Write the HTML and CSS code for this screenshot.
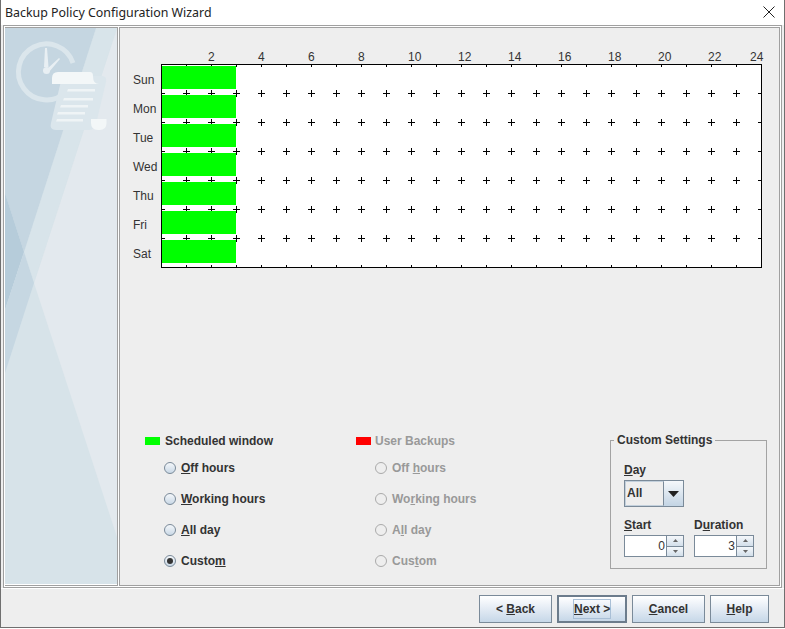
FILE: index.html
```html
<!DOCTYPE html>
<html lang="en">
<head>
<meta charset="utf-8">
<title>Backup Policy Configuration Wizard</title>
<link rel="stylesheet" href="styles.css">
</head>
<body>
<div class="window">
  <header class="titlebar">
    <span class="title">Backup Policy Configuration Wizard</span>
    <svg class="close" width="12" height="12" viewBox="0 0 12 12"><path d="M.5.5l11 11M11.500.5l-11 11"/></svg>
  </header>
  <div class="frame">
    <aside class="banner">
      <svg class="art" width="112" height="556" viewBox="5 28 112 556" preserveAspectRatio="none">
        <rect x="5" y="28" width="112" height="556" fill="#d7e3e9"/>
        <polygon points="117,28 117,537 34,283" fill="#e3e9ee"/>
        <polygon points="96,28 117,28 34,283 24,252" fill="#d8e4ea"/>
        <polygon points="5,28 96,28 24,252 5,193" fill="#c5d6e1"/>
        <polygon points="5,193 24,252 5,310" fill="#b6ccda"/>
        <polygon points="24,252 34,283 5,373 5,310" fill="#c6d7e2"/>
        <path d="M66 92A28 28 0 1 1 73 63" fill="none" stroke="#dbe6ec" stroke-width="5"/>
        <path d="M45 48h2l1.500 19h-4.500z M47 69l12-11 1 1-11 13z" fill="#e8eff3"/>
        <circle cx="46.500" cy="70.500" r="3.500" fill="#e8eff3"/>
        <path d="M66 76h36q5 0 4 6l-10 42q-1 6-8 6H56q-7 0-5-7l10-42q1-5 5-5z" fill="#dbe6ec"/>
        <path d="M52 84v-6q0-6 6-6h32q3 0 3 4q0 8 6 8z" fill="#f3f7f8"/>
        <path d="M68 89h27v2.500H67z M64 98h29v2.500H63z M61 105h27v2.500H60z M58 112h27v2.500H57z M57 119h26v2.500H56z" fill="#eff4f6"/>
        <path d="M91 119h15.500v4q0 7-7 7H98q-7 0-7-7z" fill="#f3f7f8"/>
      </svg>
    </aside>
    <main class="content">
      <section class="schedule">
        <div class="hours">
          <span>2</span><span>4</span><span>6</span><span>8</span><span>10</span><span>12</span>
          <span>14</span><span>16</span><span>18</span><span>20</span><span>22</span><span class="hour-last">24</span>
        </div>
        <div class="chart-row">
          <div class="days">
            <span>Sun</span><span>Mon</span><span>Tue</span><span>Wed</span><span>Thu</span><span>Fri</span><span>Sat</span>
          </div>
          <svg class="chart" width="601" height="204" viewBox="0 0 601 204">
            <defs>
              <pattern id="plus" x="13" y="15" width="25" height="29" patternUnits="userSpaceOnUse">
                <path d="M9 14.500h7M12.500 11v7" stroke="#000" fill="none"/>
              </pattern>
              <pattern id="tick" x="13" y="0" width="25" height="3" patternUnits="userSpaceOnUse">
                <path d="M12.500 0v3" stroke="#000" fill="none"/>
              </pattern>
            </defs>
            <rect x=".5" y=".5" width="600" height="203" fill="#fff" stroke="#000"/>
            <rect x="1" y="26" width="599" height="152" fill="url(#plus)"/>
            <rect x="1" y="1" width="599" height="2" fill="url(#tick)"/>
            <rect x="1" y="201" width="599" height="2" fill="url(#tick)"/>
            <g fill="#00ff00">
              <rect x="1" y="2" width="74" height="23"/>
              <rect x="1" y="31" width="74" height="23"/>
              <rect x="1" y="60" width="74" height="23"/>
              <rect x="1" y="89" width="74" height="23"/>
              <rect x="1" y="118" width="74" height="23"/>
              <rect x="1" y="147" width="74" height="23"/>
              <rect x="1" y="176" width="74" height="23"/>
            </g>
          </svg>
        </div>
      </section>
      <section class="settings">
        <div class="group">
          <div class="group-head"><span class="swatch swatch-green"></span>Scheduled window</div>
          <label class="radio"><span class="dot"></span><span><u>O</u>ff hours</span></label>
          <label class="radio"><span class="dot"></span><span><u>W</u>orking hours</span></label>
          <label class="radio"><span class="dot"></span><span><u>A</u>ll day</span></label>
          <label class="radio"><span class="dot dot-on"></span><span>Custo<u>m</u></span></label>
        </div>
        <div class="group group-off">
          <div class="group-head"><span class="swatch swatch-red"></span>User Backups</div>
          <label class="radio"><span class="dot"></span><span>Off <u>h</u>ours</span></label>
          <label class="radio"><span class="dot"></span><span>Wo<u>r</u>king hours</span></label>
          <label class="radio"><span class="dot"></span><span>A<u>l</u>l day</span></label>
          <label class="radio"><span class="dot"></span><span>Cus<u>t</u>om</span></label>
        </div>
        <fieldset class="custom">
          <legend>Custom Settings</legend>
          <div class="custom-body">
            <div class="field-label"><u>D</u>ay</div>
            <div class="combo">
              <span class="combo-value">All</span>
              <span class="combo-arrow"><svg width="11" height="6" viewBox="0 0 11 6"><path d="M0 0h11L5.500 6z"/></svg></span>
            </div>
            <div class="spin-row">
              <div class="spin-field">
                <div class="field-label"><u>S</u>tart</div>
                <div class="spinner">
                  <span class="spin-value">0</span>
                  <span class="spin-btns">
                    <span class="spin-btn"><svg width="5" height="3" viewBox="0 0 5 3"><path d="M2.500 0L5 3H0z"/></svg></span>
                    <span class="spin-btn"><svg width="5" height="3" viewBox="0 0 5 3"><path d="M0 0h5L2.500 3z"/></svg></span>
                  </span>
                </div>
              </div>
              <div class="spin-field">
                <div class="field-label">D<u>u</u>ration</div>
                <div class="spinner">
                  <span class="spin-value">3</span>
                  <span class="spin-btns">
                    <span class="spin-btn"><svg width="5" height="3" viewBox="0 0 5 3"><path d="M2.500 0L5 3H0z"/></svg></span>
                    <span class="spin-btn"><svg width="5" height="3" viewBox="0 0 5 3"><path d="M0 0h5L2.500 3z"/></svg></span>
                  </span>
                </div>
              </div>
            </div>
          </div>
        </fieldset>
      </section>
    </main>
  </div>
  <footer class="footer">
    <button class="btn btn-back" type="button">&lt; <u>B</u>ack</button>
    <button class="btn btn-next" type="button"><span class="focus"><u>N</u>ext &gt;</span></button>
    <button class="btn btn-cancel" type="button"><u>C</u>ancel</button>
    <button class="btn btn-help" type="button"><u>H</u>elp</button>
  </footer>
</div>
</body>
</html>
```
FILE: styles.css
```css
* { box-sizing: border-box; }
html, body { margin: 0; padding: 0; }
body {
  width: 785px;
  height: 629px;
  overflow: hidden;
  background: #fff;
  font: 12px "Liberation Sans", Arial, sans-serif;
  color: #333;
}
u { text-underline-offset: 1px; }

.window {
  width: 785px;
  height: 628px;
  display: flex;
  flex-direction: column;
  background: #eee;
  border-left: 1px solid #6f6f6f;
  border-right: 1px solid #6f6f6f;
  border-bottom: 1px solid #6f6f6f;
}

.titlebar {
  height: 25px;
  flex: none;
  background: #fff;
  display: flex;
  align-items: center;
  justify-content: space-between;
  padding: 0 9px 1px 4px;
  color: #222;
}
.title { font: 12.4px "Noto Sans", sans-serif; }
.close { stroke: #222; stroke-width: 1; fill: none; }

.frame {
  height: 563px;
  flex: none;
  margin: 0 2px;
  border: 1px solid #a0a0a0;
  padding: 1px 1px 1px 1px;
  background: #fff;
  display: flex;
  gap: 1px;
}

.banner {
  width: 113px;
  flex: none;
  border: 1px solid #a0a0a0;
  border-left: 0;
  display: flex;
}
.art { display: block; flex: none; }

.content {
  flex: 1;
  min-width: 0;
  border: 1px solid #a0a0a0;
  background: #eee;
  display: flex;
  flex-direction: column;
  justify-content: space-between;
}

.schedule { padding: 22px 0 0 13px; }
.hours {
  display: grid;
  grid-template-columns: repeat(12, 50px);
  margin-left: 75px;
  height: 14px;
  line-height: 14px;
}
.hour-last { margin-left: -8px; }
.chart-row { display: flex; }
.days {
  width: 28px;
  padding-top: 2px;
  display: grid;
  grid-auto-rows: 29px;
  line-height: 28px;
}
.chart { display: block; flex: none; }

.settings {
  display: flex;
  align-items: flex-start;
  padding: 0 12px 9px 25px;
}
.group { width: 211px; flex: none; padding-top: 3px; }
.group-head {
  display: flex;
  align-items: center;
  height: 14px;
  font-weight: bold;
  margin-bottom: 4px;
}
.swatch { width: 15px; height: 8px; margin-right: 5px; flex: none; }
.swatch-green { background: #00ff00; }
.swatch-red { background: #ff0000; margin-right: 4px; }

.radio {
  display: flex;
  align-items: center;
  height: 31px;
  padding-left: 19px;
  font-weight: bold;
  gap: 5px;
}
.dot {
  width: 12px;
  height: 12px;
  flex: none;
  border: 1px solid #7a8a99;
  border-radius: 50%;
  background: linear-gradient(#f4f7fa, #c9d8e6);
  display: flex;
  align-items: center;
  justify-content: center;
}
.dot-on::after {
  content: "";
  width: 6px;
  height: 6px;
  border-radius: 50%;
  background: #333;
}
.group-off { color: #999; width: auto; flex: 1; }
.group-off .dot { border-color: #aaa; background: #eee; }

.custom {
  width: 157px;
  height: 136px;
  margin: 2px 0 0;
  padding: 0;
  flex: none;
  border: 1px solid #a3a3a3;
}
.custom legend {
  margin-left: 3px;
  padding: 0 3px;
  font-weight: bold;
  line-height: 14px;
}
.custom-body { padding: 16px 0 0 13px; }
.field-label { font-weight: bold; line-height: 14px; margin-bottom: 3px; }

.combo {
  display: flex;
  width: 60px;
  height: 27px;
  border: 1px solid #7a8a99;
  margin-bottom: 11px;
}
.combo-value {
  flex: 1;
  border: 1px solid #c3d0dc;
  border-right: 1px solid #7a8a99;
  padding-left: 1px;
  line-height: 23px;
  font-weight: bold;
}
.combo-arrow {
  width: 19px;
  flex: none;
  background: linear-gradient(#f5f8fb, #c3d4e4);
  display: flex;
  align-items: center;
  justify-content: center;
}
.combo-arrow svg { fill: #222; }

.spin-row { display: flex; gap: 10px; }
.spin-field { width: 60px; }
.spinner {
  display: flex;
  height: 22px;
  border: 1px solid #7a8a99;
  background: #fff;
}
.spin-value {
  flex: 1;
  text-align: right;
  line-height: 20px;
  padding-right: 1px;
}
.spin-btns {
  width: 17px;
  flex: none;
  display: flex;
  flex-direction: column;
  border-left: 1px solid #7a8a99;
}
.spin-btn {
  flex: 1;
  display: flex;
  align-items: center;
  justify-content: center;
  background: linear-gradient(#f5f8fb, #d3dfea);
}
.spin-btn + .spin-btn { border-top: 1px solid #7a8a99; }
.spin-btn svg { fill: #666; }

.footer {
  flex: 1;
  display: flex;
  justify-content: flex-end;
  gap: 5px;
  padding: 6px 15px 0 0;
  border-top: 1px solid #fff;
}
.btn {
  height: 28px;
  padding: 0;
  border: 1px solid #7a8a99;
  background: linear-gradient(#fff 0%, #f4f7fb 20%, #c6d7e8 100%);
  font: bold 12px "Liberation Sans", Arial, sans-serif;
  color: #333;
}
.btn-back { width: 73px; }
.btn-next { width: 70px; border: 2px solid #6c7c8c; }
.btn-cancel { width: 73px; }
.btn-help { width: 59px; }
.focus {
  display: inline-block;
  border: 1px solid #a9bfd6;
  width: 38px;
  height: 20px;
  line-height: 18px;
  text-align: center;
  white-space: nowrap;
}
```
